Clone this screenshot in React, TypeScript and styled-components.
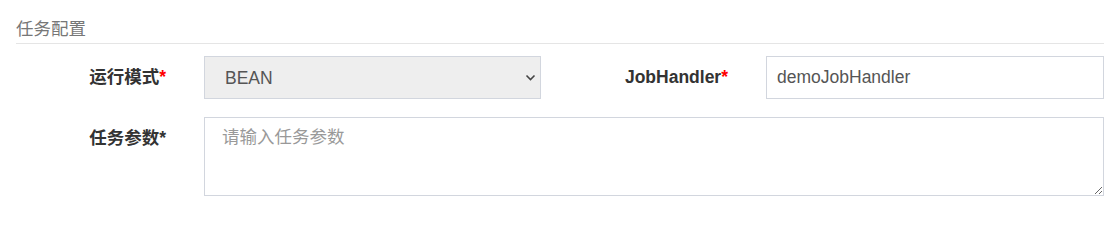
import React from "react";
import styled, { createGlobalStyle } from "styled-components";

const GlobalStyle = createGlobalStyle`
  html, body { margin: 0; padding: 0; background: #fff; }
  body {
    font-family: "Liberation Sans", Arial, "Noto Sans CJK SC", sans-serif;
    font-size: 17.5px;
    color: #333;
  }
  * { box-sizing: border-box; }
`;

const Page = styled.div`
  padding: 18px 12px 0 16px;
`;

const SectionTitle = styled.div`
  font-size: 17.5px;
  line-height: 22px;
  color: #777;
  padding-bottom: 3px;
  border-bottom: 1px solid #e5e5e5;
  margin-bottom: 12px;
`;

const FormGrid = styled.div`
  display: grid;
  grid-template-columns: 188px 337px 225px 338px;
  row-gap: 18px;
`;

const Label = styled.label`
  text-align: right;
  font-weight: bold;
  color: #333;
  padding-right: 38px;
  padding-top: 9px;
  line-height: 24px;
  white-space: nowrap;
`;

const Star = styled.span<{ $red?: boolean }>`
  color: ${(p) => (p.$red ? "#f00" : "#333")};
`;

const SelectWrap = styled.div`
  position: relative;
  height: 43px;
`;

const Select = styled.select`
  appearance: none;
  -webkit-appearance: none;
  width: 100%;
  height: 43px;
  border: 1px solid #d2d6de;
  border-radius: 0;
  background: #eeeeee;
  color: #555;
  font-family: inherit;
  font-size: 17.5px;
  padding: 0 30px 0 20px;
  outline: none;
`;

const Chevron = styled.svg`
  position: absolute;
  right: 5px;
  top: 18px;
  width: 11px;
  height: 7px;
  pointer-events: none;
`;

const TextInput = styled.input`
  width: 100%;
  height: 43px;
  border: 1px solid #d2d6de;
  border-radius: 0;
  background: #fff;
  color: #555;
  font-family: inherit;
  font-size: 17.5px;
  padding: 0 10px;
  outline: none;
`;

const TextArea = styled.textarea`
  grid-column: 2 / span 3;
  width: 100%;
  height: 79px;
  border: 1px solid #d2d6de;
  border-radius: 0;
  background: #fff;
  color: #555;
  font-family: inherit;
  font-size: 17.5px;
  line-height: 24px;
  padding: 7px 17px;
  outline: none;
  &::placeholder { color: #999; }
`;

export default function App() {
  return (
    <Page>
      <GlobalStyle />
      <SectionTitle>任务配置</SectionTitle>
      <FormGrid>
        <Label>
          运行模式<Star $red>*</Star>
        </Label>
        <SelectWrap>
          <Select defaultValue="BEAN">
            <option value="BEAN">BEAN</option>
            <option value="GLUE">GLUE(Java)</option>
          </Select>
          <Chevron viewBox="0 0 11 7">
            <path d="M1.5 1.5 L5.5 5.5 L9.5 1.5" fill="none" stroke="#444" strokeWidth="1.6" />
          </Chevron>
        </SelectWrap>
        <Label>
          JobHandler<Star $red>*</Star>
        </Label>
        <TextInput defaultValue="demoJobHandler" />
        <Label>
          任务参数<Star>*</Star>
        </Label>
        <TextArea placeholder="请输入任务参数" />
      </FormGrid>
    </Page>
  );
}
